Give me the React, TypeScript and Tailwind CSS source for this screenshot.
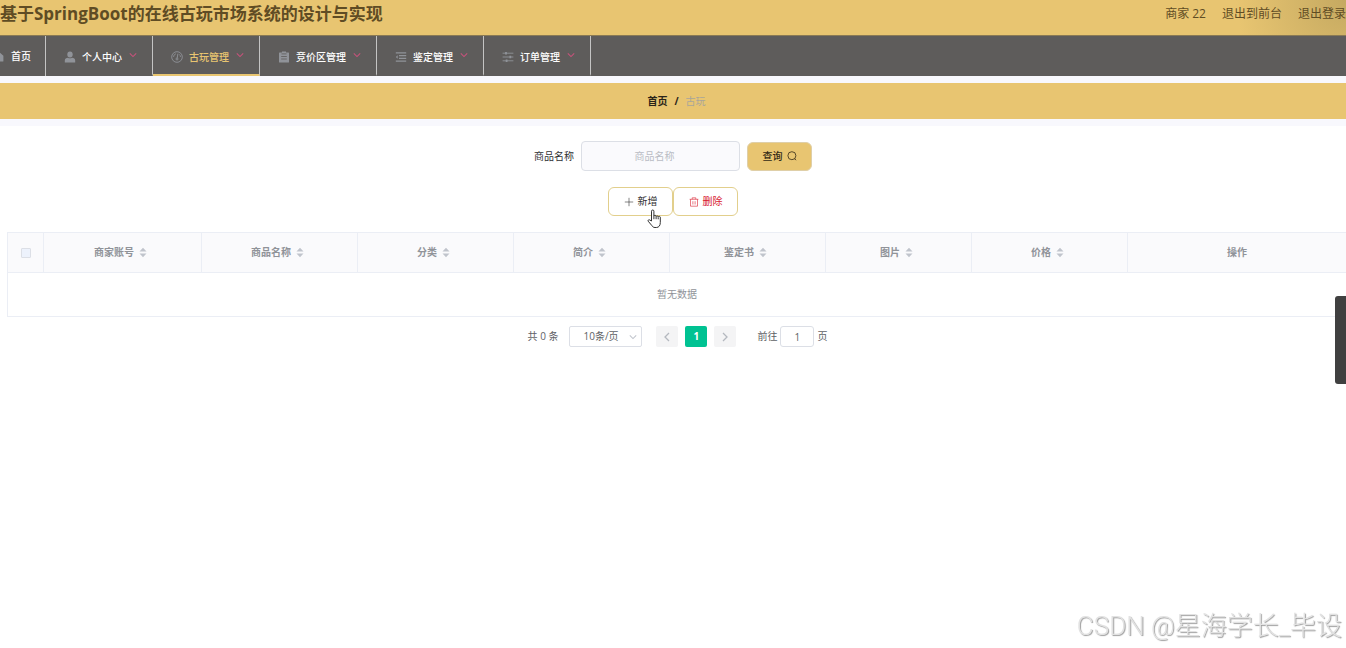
import { useState, type ReactNode } from 'react';

type IconProps = { className?: string };

function HomeIcon({ className }: IconProps) {
  return (
    <svg viewBox="0 0 12 12" className={className} fill="currentColor">
      <path d="M6 .8 11.4 5.8V11a.6.6 0 0 1-.6.6H7.6V8H4.4v3.6H1.2A.6.6 0 0 1 .6 11V5.8z" />
    </svg>
  );
}

function UserIcon({ className }: IconProps) {
  return (
    <svg viewBox="0 0 12 12" className={className} fill="currentColor">
      <ellipse cx="6" cy="3.4" rx="2.7" ry="3" />
      <path d="M.8 11.4V9.4C.8 7.8 2.2 7 4 6.800c1.200.7 2.800.7 4 0 1.800.2 3.200 1 3.200 2.600v2z" />
    </svg>
  );
}

function GaugeIcon({ className }: IconProps) {
  return (
    <svg viewBox="0 0 12 12" className={className} fill="none" stroke="currentColor">
      <circle cx="6" cy="6" r="5.3" strokeWidth=".9" />
      <path d="M2.500 6A3.500 3.500 0 0 1 5 2.700M9.500 6a3.500 3.500 0 0 0-1.200-2.600" strokeWidth=".8" />
      <path d="M6.900 2.700 6.200 7" strokeWidth=".9" />
      <circle cx="6" cy="8" r="1" strokeWidth=".9" />
    </svg>
  );
}

function ClipboardIcon({ className }: IconProps) {
  return (
    <svg viewBox="0 0 12 12" className={className}>
      <path fill="currentColor" d="M4 .4h4v1h2.500a.5.5 0 0 1 .5.5v9.200a.5.5 0 0 1-.5.5h-9a.5.5 0 0 1-.5-.5V1.900a.5.5 0 0 1 .5-.5H4z" />
      <path stroke="#5e5c5b" strokeWidth=".8" d="M3.500 2.900h5M3.200 5.500h5.600M3.200 8h5.600" />
    </svg>
  );
}

function FoldIcon({ className }: IconProps) {
  return (
    <svg viewBox="0 0 12 12" className={className} fill="none" stroke="currentColor" strokeWidth="1.200">
      <path d="M.8 1.900h10.400M4 4.700h7.200M4 7.300h7.200M.8 10.100h10.400" />
      <path d="M2.700 4.300.8 6l1.900 1.700z" fill="currentColor" stroke="none" />
    </svg>
  );
}

function SlidersIcon({ className }: IconProps) {
  return (
    <svg viewBox="0 0 12 12" className={className} fill="none" stroke="currentColor">
      <path d="M.6 2.200h10.800M.6 6h10.800M.6 9.800h10.800" strokeWidth=".9" />
      <path d="M4 1v2.400M8.300 4.800v2.400M4.600 8.600V11" strokeWidth="1.800" />
    </svg>
  );
}

function Chevron({ className, d = 'M1 3l4 4 4-4' }: IconProps & { d?: string }) {
  return (
    <svg viewBox="0 0 10 10" className={className} fill="none" stroke="currentColor" strokeWidth="1.300">
      <path d={d} />
    </svg>
  );
}

function SortIcon() {
  return (
    <svg viewBox="0 0 8 12" className="h-3 w-2 text-[#c0c4cc]" fill="currentColor">
      <path d="M4 .8 7.500 4.600h-7zM4 10.200.5 6.400h7z" />
    </svg>
  );
}

const menus: { label: string; icon: ReactNode; active?: boolean }[] = [
  { label: '个人中心', icon: <UserIcon className="size-3" /> },
  { label: '古玩管理', icon: <GaugeIcon className="size-3" />, active: true },
  { label: '竞价区管理', icon: <ClipboardIcon className="size-3" /> },
  { label: '鉴定管理', icon: <FoldIcon className="size-3" /> },
  { label: '订单管理', icon: <SlidersIcon className="size-3" /> },
];

const columns = [
  { label: '商家账号', width: 'w-[158px]' },
  { label: '商品名称', width: 'w-[156px]' },
  { label: '分类', width: 'w-[156px]' },
  { label: '简介', width: 'w-[156px]' },
  { label: '鉴定书', width: 'w-[156px]' },
  { label: '图片', width: 'w-[146px]' },
  { label: '价格', width: 'w-[156px]' },
];

function Header() {
  return (
    <header className="flex h-[35px] items-start justify-between overflow-hidden bg-[#e8c571] bg-[radial-gradient(circle_at_100%_0,#c5a961_0,#e8c571_110px)] text-[#5f4c24]">
      <h1 className="text-[17px] font-bold leading-7 whitespace-nowrap">
        基于SpringBoot的在线古玩市场系统的设计与实现
      </h1>
      <div className="flex gap-4 text-xs leading-7 whitespace-nowrap">
        <span>商家 22</span>
        <a href="#front">退出到前台</a>
        <a href="#logout">退出登录</a>
      </div>
    </header>
  );
}

function Navbar() {
  return (
    <nav className="flex h-[41px] overflow-hidden border-t border-[#8a7a55] bg-[#5e5c5b] text-[10px] font-medium text-white">
      <a href="#home" className="flex w-[46px] items-center justify-end gap-[7px] border-r border-[#c4c4c4] pr-[14px]">
        <HomeIcon className="size-3 shrink-0 text-[#909399]" />
        <span className="shrink-0">首页</span>
      </a>
      {menus.map((menu) => (
        <button
          key={menu.label}
          type="button"
          className={`flex items-center border-r border-b-2 border-r-[#c4c4c4] pt-1 pr-[15px] pl-[18px] ${
            menu.active ? 'border-b-[#e8c571] text-[#e8c571]' : 'border-b-transparent'
          }`}
        >
          <span className="text-[#909399]">{menu.icon}</span>
          <span className="mr-[7px] ml-[6px]">{menu.label}</span>
          <Chevron className="mb-1 size-2 text-[#c9527c]" />
        </button>
      ))}
    </nav>
  );
}

function Breadcrumb() {
  return (
    <div className="border-y-[7px] border-[#f8f8fd] bg-[#e8c571]">
      <div className="flex h-9 items-center justify-center gap-[6px] pl-[7px] text-[10px]">
        <a href="#home" className="font-bold text-[#2a2418]">首页</a>
        <span className="px-px font-bold text-[#2a2418]">/</span>
        <span className="text-[#aaa699]">古玩</span>
      </div>
    </div>
  );
}

function SearchForm() {
  return (
    <form className="flex items-center justify-center gap-[7px] pt-[15px]" onSubmit={(e) => e.preventDefault()}>
      <label htmlFor="goods" className="text-[10px] text-[#303133]">商品名称</label>
      <input
        id="goods"
        placeholder="商品名称"
        className="h-[30px] w-[159px] rounded border border-[#dcdfe6] bg-[#fafafd] pr-3 text-center text-[10px] outline-none placeholder:text-[#b9bcc4]"
      />
      <button
        type="submit"
        className="flex h-[29px] w-[65px] items-center justify-center gap-1 rounded-md border border-[#dfcfa8] bg-[#e8c571] text-[10px] font-medium text-[#332a16]"
      >
        查询
        <svg viewBox="0 0 10 10" className="size-[10px]" fill="none" stroke="currentColor" strokeWidth=".8">
          <circle cx="4.900" cy="4.700" r="4" />
          <path d="M7.700 7.600 9 9.200" />
        </svg>
      </button>
    </form>
  );
}

// Hand pointer resting on the add button
function Pointer() {
  return (
    <svg viewBox="0 0 14 20" className="absolute top-[22px] left-[39px] h-5 w-[14px]" fill="#fff" stroke="#333" strokeWidth="1" strokeLinejoin="round">
      <path d="M4.500 12V2.200a1.200 1.200 0 0 1 2.400 0v5a1.100 1.100 0 0 1 2.200.4 1.100 1.100 0 0 1 2.100.5 1.100 1.100 0 0 1 2.100.7v4.700c0 2.900-1.300 5-4 5H8c-1.600 0-2.500-.8-3.300-2.100L1.200 12.200c-.6-1 .7-2 1.600-1.200z" />
      <path d="M6.900 7.200v3M9.100 7.800v2.400M11.200 8.300v2" fill="none" />
    </svg>
  );
}

function Actions() {
  const base =
    'flex h-[29px] w-[65px] items-center justify-center gap-1 rounded-md border border-[#e2cf8c] bg-white text-[10px]';
  return (
    <div className="flex justify-center pt-4">
      <div className="relative">
        <button type="button" className={`${base} text-[#333]`}>
          <svg viewBox="0 0 10 10" className="size-[10px]" fill="none" stroke="currentColor" strokeWidth=".6">
            <path d="M5 .8v8.400M.8 5h8.400" />
          </svg>
          新增
        </button>
        <Pointer />
      </div>
      <button type="button" className={`${base} text-[#d8202f]`}>
        <svg viewBox="0 0 10 10" className="size-[10px]" fill="none" stroke="currentColor" strokeWidth=".6">
          <path d="M.6 2.300h8.800M3.200 2.300V.8h3.600v1.500M1.500 2.300v6.900h7V2.300M3.900 4.200v3.300M6.100 4.200v3.300" />
        </svg>
        删除
      </button>
    </div>
  );
}

function GoodsTable() {
  return (
    <table className="w-full table-fixed border-separate border-spacing-0 border-t border-l border-[#ebeef5] text-[10px] text-[#909399]">
      <thead className="bg-[#fafafc]">
        <tr className="h-10">
          <th className="w-9 border-r border-b border-[#ebeef5] p-0">
            <input
              type="checkbox"
              disabled
              aria-label="全选"
              className="mx-auto block size-[10px] appearance-none rounded-[1px] border border-[#dcdfe6] bg-[#edf2fc]"
            />
          </th>
          {columns.map((column) => (
            <th key={column.label} className={`${column.width} border-r border-b border-[#ebeef5] p-0 font-bold`}>
              <div className="flex items-center justify-center gap-[5px] pr-1">
                {column.label}
                <SortIcon />
              </div>
            </th>
          ))}
          <th className="border-b border-[#ebeef5] p-0 font-bold">操作</th>
        </tr>
      </thead>
      <tbody>
        <tr className="h-11">
          <td colSpan={columns.length + 2} className="border-b border-[#ebeef5] p-0 text-center">
            暂无数据
          </td>
        </tr>
      </tbody>
    </table>
  );
}

function Pagination() {
  const [page, setPage] = useState('1');
  return (
    <div className="flex items-center justify-center pt-[9px] pl-[2px] text-[10px] text-[#606266]">
      <span className="mr-[11px]">共 0 条</span>
      <div className="relative mr-[14px]">
        <select
          aria-label="每页条数"
          className="block h-[21px] w-[73px] appearance-none rounded-xs border border-[#dcdfe6] bg-white pl-[13px] outline-none"
        >
          <option>10条/页</option>
          <option>20条/页</option>
        </select>
        <Chevron className="pointer-events-none absolute top-[7px] right-[5px] size-2 text-[#c0c4cc]" />
      </div>
      <div className="mr-[21px] flex gap-[7px]">
        <button type="button" aria-label="上一页" className="flex h-[21px] w-[22px] items-center justify-center rounded-xs bg-[#f4f4f5] text-[#b4b8bf]">
          <Chevron className="size-[10px]" d="M7 1 3 5l4 4" />
        </button>
        <button type="button" className="h-[21px] w-[22px] rounded-xs bg-[#00c292] font-bold text-white">
          1
        </button>
        <button type="button" aria-label="下一页" className="flex h-[21px] w-[22px] items-center justify-center rounded-xs bg-[#f4f4f5] text-[#b4b8bf]">
          <Chevron className="size-[10px]" d="M3 1l4 4-4 4" />
        </button>
      </div>
      <label className="flex items-center gap-[3px]">
        前往
        <input
          value={page}
          onChange={(e) => setPage(e.target.value)}
          className="h-[21px] w-[34px] rounded-[3px] border border-[#dcdfe6] text-center outline-none"
        />
        页
      </label>
    </div>
  );
}

export default function App() {
  return (
    <div className="min-h-screen overflow-hidden bg-white font-['Open_Sans','Noto_Sans_CJK_SC',sans-serif]" lang="zh-CN">
      <Header />
      <Navbar />
      <Breadcrumb />
      <main>
        <SearchForm />
        <Actions />
        <div className="pt-4 pl-[7px]">
          <GoodsTable />
          <Pagination />
        </div>
      </main>
      <div className="fixed top-[296px] right-0 h-[88px] w-[11px] rounded-l-[3px] bg-[#404040]" />
      <p className="fixed right-1 bottom-1 font-['Roboto','Noto_Sans_CJK_SC',sans-serif] text-[26px] leading-9 font-light text-[#e2e2e2] [text-shadow:1px_1px_1px_#9c9c9c]">
        CSDN @星海学长_毕设
      </p>
    </div>
  );
}
